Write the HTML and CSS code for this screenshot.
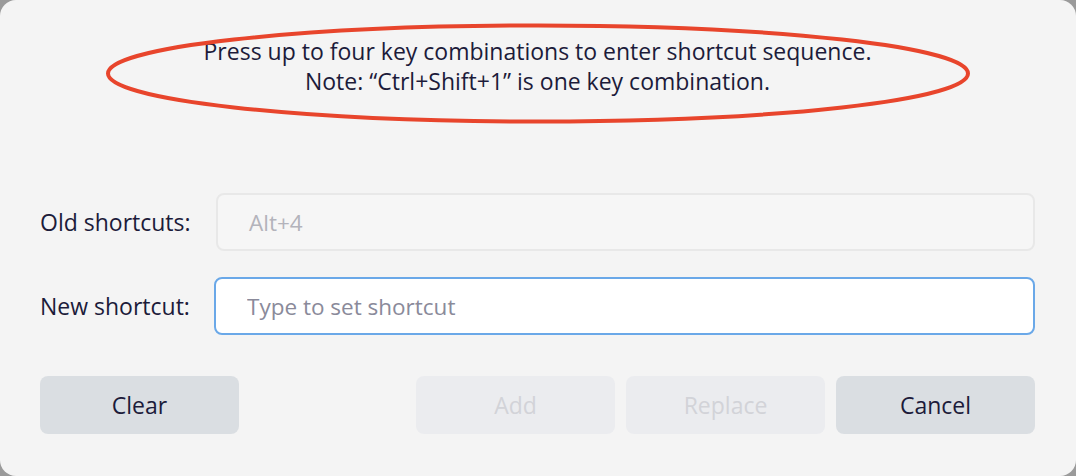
FILE: index.html
```html
<!DOCTYPE html>
<html lang="en">

<head>
    <meta charset="UTF-8">
    <title>Set shortcut</title>
    <link rel="stylesheet" href="styles.css">
</head>

<body>
    <div class="dialog">
        <!-- red marker around the hint -->
        <svg class="marker" width="868" height="108" viewBox="0 0 868 108">
            <ellipse cx="434" cy="53.5" rx="430" ry="48" fill="none" stroke="#e8452c" stroke-width="4" />
        </svg>

        <p class="hint">
            Press up to four key combinations to enter shortcut sequence.<br>
            Note: “Ctrl+Shift+1” is one key combination.
        </p>

        <div class="form">
            <label class="label">Old shortcuts:</label>
            <div class="field field-old">Alt+4</div>

            <label class="label">New shortcut:</label>
            <input class="field field-new" type="text" placeholder="Type to set shortcut">
        </div>

        <div class="buttons">
            <button class="btn">Clear</button>
            <button class="btn btn-push" disabled>Add</button>
            <button class="btn" disabled>Replace</button>
            <button class="btn">Cancel</button>
        </div>
    </div>
</body>

</html>
```

FILE: styles.css
```css
body {
    margin: 0;
    background: #9a9a9a;
    font-family: "Open Sans", "Noto Sans", sans-serif;
    color: #1c1b3a;
}

.dialog {
    position: relative;
    box-sizing: border-box;
    height: 476px;
    padding: 36px 41px 0 40px;
    border-radius: 16px;
    background: #f4f4f4;
}

.marker {
    position: absolute;
    left: 104px;
    top: 20px;
}

.hint {
    margin: 0;
    text-align: center;
    font-size: 23px;
    line-height: 30px;
}

.form {
    display: grid;
    grid-template-columns: 175px 1fr;
    row-gap: 26px;
    align-items: center;
    margin-top: 97px;
}

.label {
    font-size: 23px;
}

.field {
    box-sizing: border-box;
    height: 58px;
    border-radius: 8px;
    padding: 0 31px;
    font-family: inherit;
    font-size: 22.5px;
    display: flex;
    align-items: center;
}

.field-old {
    margin-left: 1px;
    border: 2px solid #e8e8e8;
    background: #f6f6f6;
    color: #b3b3bb;
}

.field-new {
    width: calc(100% + 1px);
    margin-left: -1px;
    border: 2px solid #6aa8e8;
    background: #fff;
    color: #1c1b3a;
    outline: none;
}

.field-new::placeholder {
    color: #8a8a9a;
}

.buttons {
    display: flex;
    gap: 11px;
    margin-top: 41px;
}

.btn {
    width: 199px;
    height: 58px;
    border: none;
    border-radius: 8px;
    background: #dadee2;
    font-family: inherit;
    font-size: 23px;
    color: #1c1b3a;
}

.btn-push {
    margin-left: auto;
}

.btn:disabled {
    background: #ebecef;
    color: #d2d3d8;
}
```
